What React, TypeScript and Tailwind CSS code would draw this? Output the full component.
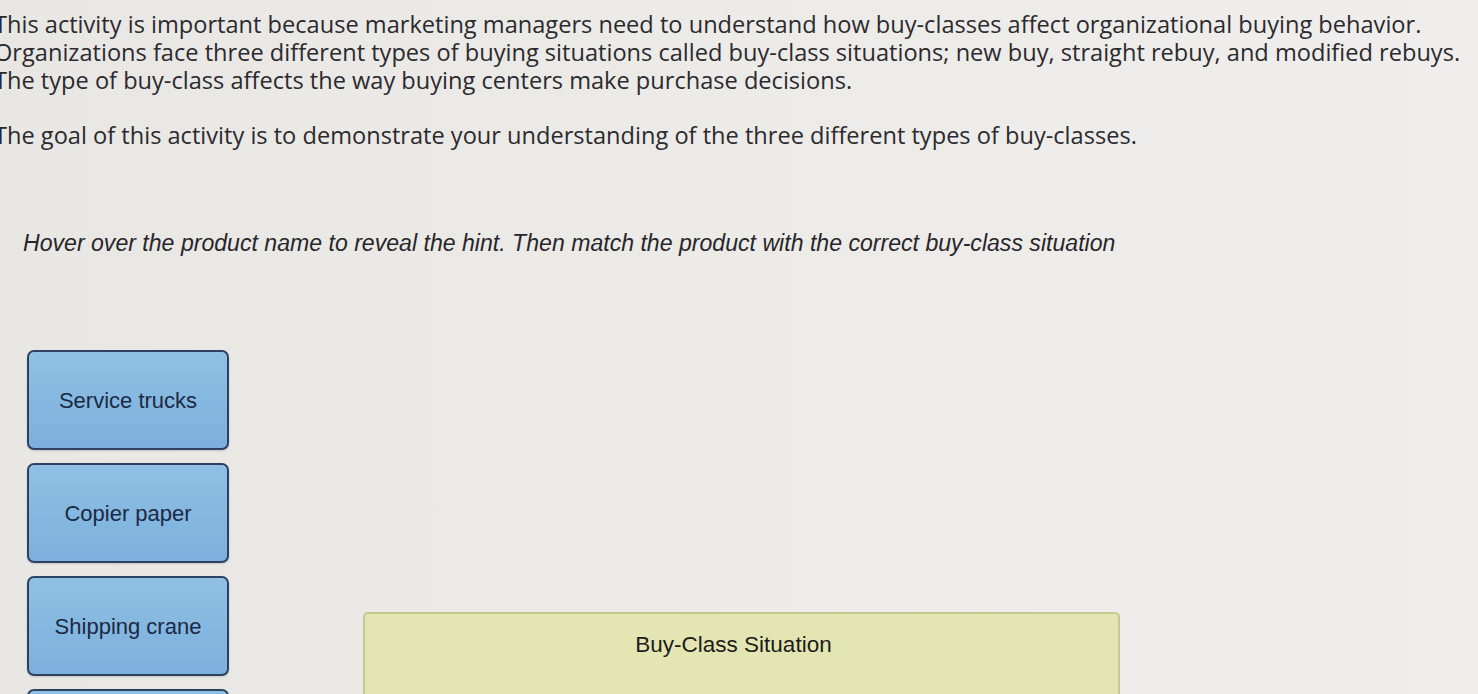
export default function App() {
  const items = ["Service trucks", "Copier paper", "Shipping crane", ""];
  return (
    <div className="relative h-[694px] w-[1478px] overflow-hidden bg-gradient-to-r from-[#e8e7e4] via-[#ecebe8] to-[#efeeec] text-[#2c2a2e]">
      <div className="ml-[-6px] pt-[10px] font-['Open_Sans',sans-serif] text-[23.6px] leading-[28px]">
        <p>This activity is important because marketing managers need to understand how buy-classes affect organizational buying behavior.</p>
        <p>Organizations face three different types of buying situations called buy-class situations; new buy, straight rebuy, and modified rebuys.</p>
        <p>The type of buy-class affects the way buying centers make purchase decisions.</p>
        <p className="mt-[27px]">The goal of this activity is to demonstrate your understanding of the three different types of buy-classes.</p>
      </div>
      <p className="ml-[23px] mt-[80px] font-['Liberation_Sans',Arial,sans-serif] text-[23.1px] italic leading-[28px] text-[#28262a]">
        Hover over the product name to reveal the hint. Then match the product with the correct buy-class situation
      </p>
      <div className="mt-[93px] flex items-start gap-[134px]">
        <div className="ml-[27px] flex flex-col gap-[13px]">
          {items.map((t, i) => (
            <div
              key={i}
              className="flex h-[100px] w-[202px] items-center justify-center rounded-[7px] border-2 border-[#2d4262] bg-gradient-to-b from-[#8fc0e4] to-[#7cb0dc] font-['Liberation_Sans',Arial,sans-serif] text-[22px] text-[#1b2a44] shadow-[0_1px_2px_rgba(0,0,0,0.15)]"
            >
              {t}
            </div>
          ))}
        </div>
        <div className="mt-[262px] h-[120px] w-[757px] rounded-[5px] border-2 border-[#c7c792] bg-[#e3e6b3] pr-[16px] pt-[14px] text-center font-['Liberation_Sans',Arial,sans-serif] text-[22.5px] text-[#1d1c1a]">
          Buy-Class Situation
        </div>
      </div>
    </div>
  );
}
